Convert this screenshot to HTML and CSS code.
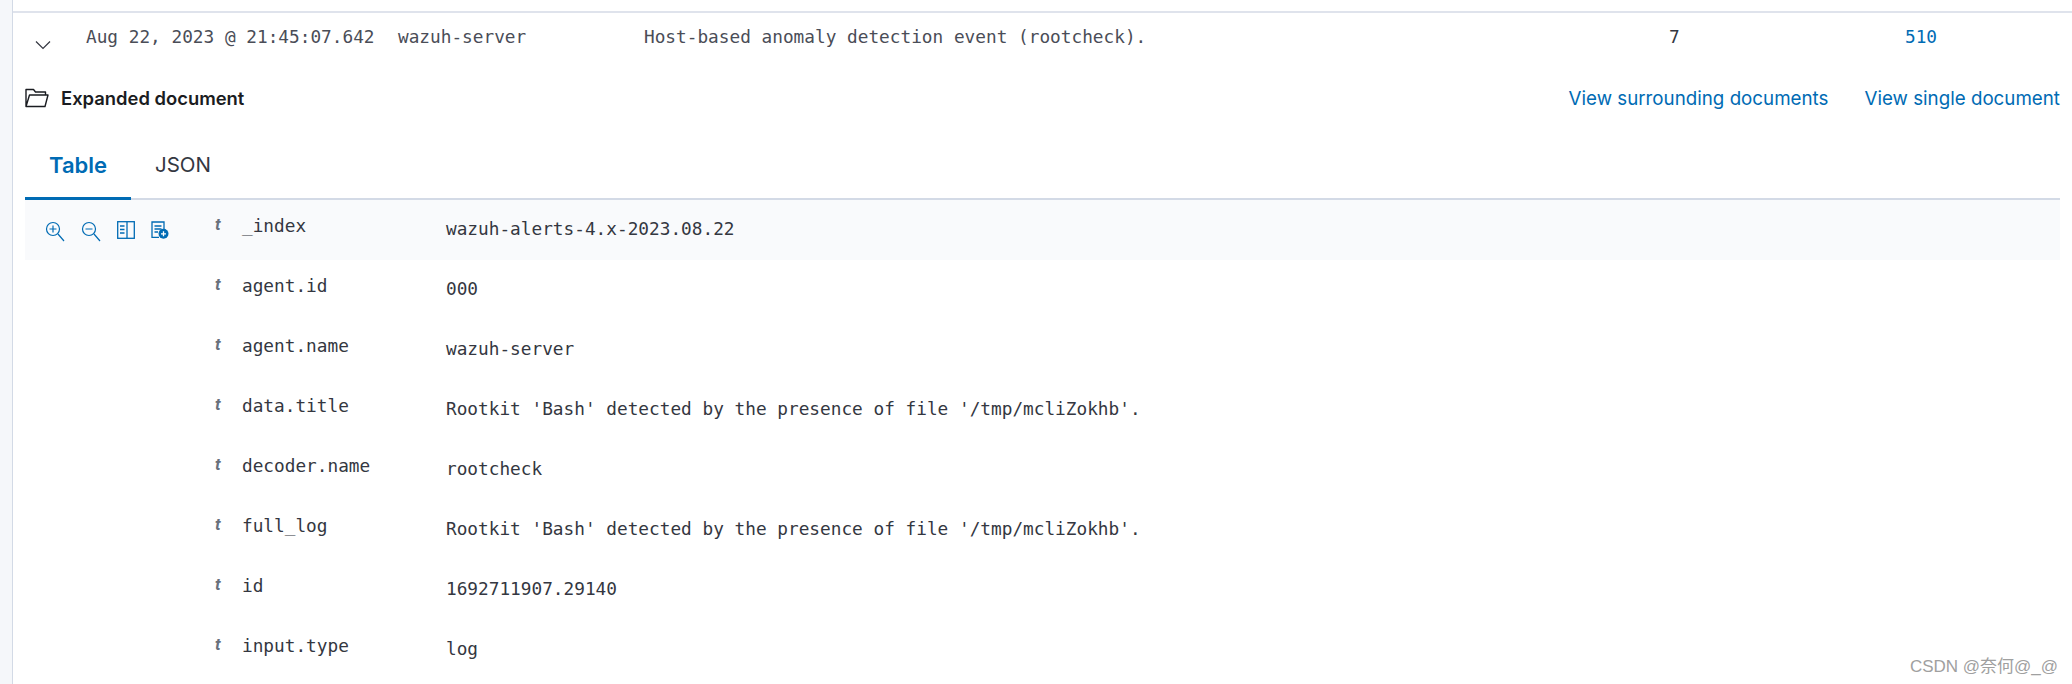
FILE: index.html
```html
<!DOCTYPE html>
<html lang="en">
<head>
  <meta charset="utf-8">
  <title>Expanded document</title>
  <link rel="stylesheet" href="styles.css">
</head>
<body>
  <div class="page">
    <!-- hit row -->
    <div class="hit-row">
      <svg class="chevron" width="16" height="10" viewBox="0 0 16 10"><path d="M1 1.5 L8 8.5 L15 1.5" fill="none" stroke="#343741" stroke-width="1.2"/></svg>
      <span class="hit-time">Aug 22, 2023 @ 21:45:07.642</span>
      <span class="hit-agent">wazuh-server</span>
      <span class="hit-desc">Host-based anomaly detection event (rootcheck).</span>
      <span class="hit-level">7</span>
      <a class="hit-rule">510</a>
    </div>

    <!-- doc header -->
    <div class="doc-head">
      <svg class="folder" width="24" height="20" viewBox="0 0 24 20"><path d="M1 18.5 V1.5 H8.5 L10.5 4 H20.5 V7 M1 18.5 L4.5 7 H23 L20 18.5 Z" fill="none" stroke="#1a1c21" stroke-width="1.4" stroke-linejoin="round"/></svg>
      <span class="doc-title">Expanded document</span>
      <a class="doc-link first">View surrounding documents</a>
      <a class="doc-link">View single document</a>
    </div>

    <!-- tabs -->
    <div class="tabs">
      <div class="tab active">Table</div>
      <div class="tab">JSON</div>
    </div>

    <!-- fields -->
    <div class="fields">
      <div class="field hl">
        <div class="actions">
          <svg width="20" height="22" viewBox="0 0 20 22"><g fill="none" stroke="#006bb4" stroke-width="1.2"><circle cx="8" cy="8" r="6.5"/><path d="M13 13 L19 20 M8 4.5 V11.5 M4.5 8 H11.5"/></g></svg>
          <svg width="20" height="22" viewBox="0 0 20 22"><g fill="none" stroke="#006bb4" stroke-width="1.2"><circle cx="8" cy="8" r="6.5"/><path d="M13 13 L19 20 M4.5 8 H11.5"/></g></svg>
          <svg width="18" height="18" viewBox="0 0 18 18"><g fill="none" stroke="#006bb4" stroke-width="1.3"><rect x="0.7" y="0.7" width="16.6" height="16.6"/><path d="M10 1 V17 M3 5 H7.5 M3 8.5 H7.5 M3 12 H7.5"/></g></svg>
          <svg width="18" height="18" viewBox="0 0 18 18"><g fill="none" stroke="#006bb4" stroke-width="1.3"><path d="M8 16.3 H1 V1 H13 V8"/><path d="M3.5 5 H10.5 M3.5 8 H10.5 M3.5 11 H7"/></g><circle cx="12.5" cy="12.8" r="5" fill="#006bb4"/><path d="M10 12.8 H15 M12.5 10.3 V15.3" stroke="#fff" stroke-width="1.3"/></svg>
        </div>
        <i class="type">t</i><span class="name">_index</span><span class="value">wazuh-alerts-4.x-2023.08.22</span>
      </div>
      <div class="field"><div class="actions"></div><i class="type">t</i><span class="name">agent.id</span><span class="value">000</span></div>
      <div class="field"><div class="actions"></div><i class="type">t</i><span class="name">agent.name</span><span class="value">wazuh-server</span></div>
      <div class="field"><div class="actions"></div><i class="type">t</i><span class="name">data.title</span><span class="value">Rootkit 'Bash' detected by the presence of file '/tmp/mcliZokhb'.</span></div>
      <div class="field"><div class="actions"></div><i class="type">t</i><span class="name">decoder.name</span><span class="value">rootcheck</span></div>
      <div class="field"><div class="actions"></div><i class="type">t</i><span class="name">full_log</span><span class="value">Rootkit 'Bash' detected by the presence of file '/tmp/mcliZokhb'.</span></div>
      <div class="field"><div class="actions"></div><i class="type">t</i><span class="name">id</span><span class="value">1692711907.29140</span></div>
      <div class="field"><div class="actions"></div><i class="type">t</i><span class="name">input.type</span><span class="value">log</span></div>
    </div>
  </div>
  <div class="watermark">CSDN @奈何@_@</div>
</body>
</html>
```

FILE: styles.css
```css
* { margin: 0; padding: 0; box-sizing: border-box; }
html, body { height: 100%; }
body {
  background: #f5f7fa;
  font-family: "Inter", "Liberation Sans", sans-serif;
  color: #343741;
  overflow: hidden;
}
.page {
  margin-left: 12px;
  height: 684px;
  background: #fff;
  border-left: 1px solid #d3dae6;
  padding-top: 11px;
  overflow: hidden;
}
/* hit row */
.hit-row {
  height: 51px;
  border-top: 2px solid #dfe3ec;
  display: flex;
  align-items: flex-start;
  padding-top: 13px;
  font-family: "DejaVu Sans Mono", monospace;
  font-size: 17.75px;
  line-height: 22px;
}
.chevron { margin: 14px 0 0 22px; flex: none; }
.hit-time { margin-left: 35px; width: 312px; color: #4a4d57; }
.hit-agent { width: 246px; color: #4a4d57; }
.hit-desc { width: 1025px; color: #4a4d57; }
.hit-level { width: 236px; }
.hit-rule { color: #006bb4; }
/* doc header */
.doc-head {
  display: flex;
  align-items: center;
  height: 48px;
  margin-top: 12px;
  padding-left: 12px;
  width: 2047px;
}
.folder { flex: none; }
.doc-title { margin-left: 12px; font-size: 18.4px; font-weight: 600; color: #1a1c21; }
.doc-link { font-size: 18.75px; color: #006bb4; margin-left: 36px; }
.doc-link.first { margin-left: auto; }
/* tabs */
.tabs {
  display: flex;
  margin: 18px 0 0 12px;
  width: 2035px;
  height: 60px;
  border-bottom: 2px solid #d3dae6;
}
.tab {
  padding: 0 24px;
  height: 60px;
  line-height: 50px;
  font-size: 20.5px;
  color: #343741;
}
.tab.active {
  color: #006bb4;
  font-size: 22px;
  font-weight: 600;
  border-bottom: 3px solid #006bb4;
  width: 106px;
}
/* doc fields */
.fields { margin-left: 12px; width: 2035px; }
.field {
  display: flex;
  height: 60px;
  font-family: "DejaVu Sans Mono", monospace;
  font-size: 17.75px;
  line-height: 20px;
  padding-top: 19px;
}
.field.hl { background: #f9fafc; }
.actions {
  width: 190px;
  flex: none;
  display: flex;
  align-items: flex-start;
  gap: 16px;
  padding: 2px 0 0 20px;
}
.actions svg { flex: none; }
.type {
  width: 27px;
  flex: none;
  font-family: "Roboto", sans-serif;
  font-weight: 700;
  font-size: 17px;
  color: #69707d;
  margin-top: -5px;
}
.name { width: 204px; flex: none; margin-top: -3px; color: #343741; }
.value { color: #343741; }
/* csdn watermark */
.watermark {
  position: absolute;
  right: 14px;
  bottom: 7px;
  font-family: "Liberation Sans", "Noto Sans CJK SC", sans-serif;
  font-size: 17px;
  color: #a0a0a0;
}
```
